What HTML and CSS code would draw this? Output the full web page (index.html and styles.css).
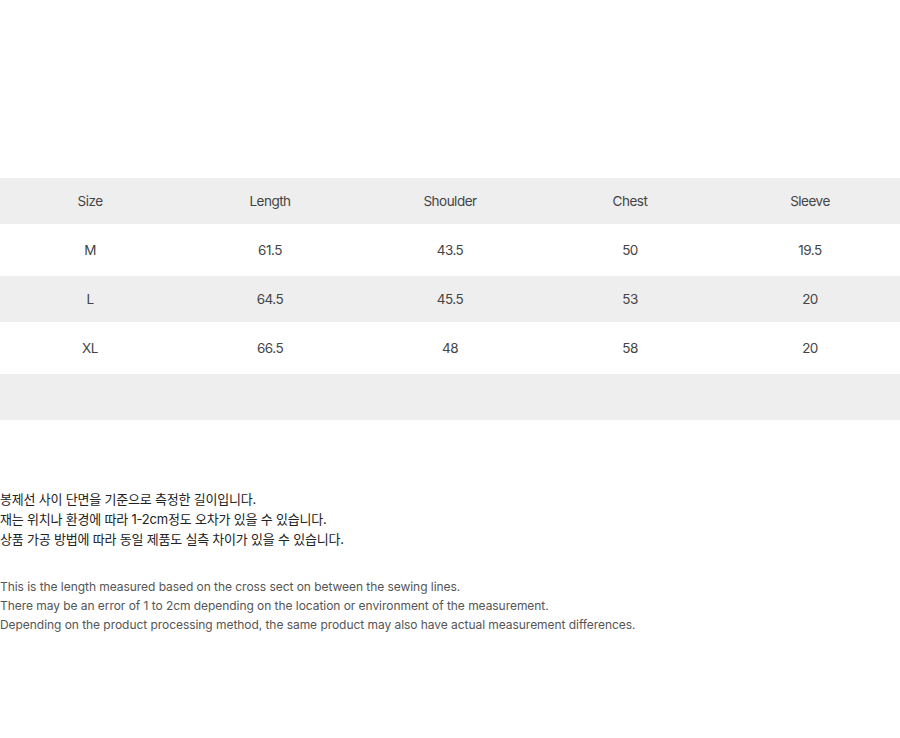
FILE: index.html
```html
<!DOCTYPE html>
<html lang="ko">
<head>
<meta charset="utf-8">
<link rel="stylesheet" href="styles.css">
</head>
<body>
<div class="page">
  <div class="size-table">
    <div class="row gray short"><div class="cell">Size</div><div class="cell">Length</div><div class="cell">Shoulder</div><div class="cell">Chest</div><div class="cell">Sleeve</div></div>
    <div class="row tall"><div class="cell">M</div><div class="cell">61.5</div><div class="cell">43.5</div><div class="cell">50</div><div class="cell">19.5</div></div>
    <div class="row gray short"><div class="cell">L</div><div class="cell">64.5</div><div class="cell">45.5</div><div class="cell">53</div><div class="cell">20</div></div>
    <div class="row tall"><div class="cell">XL</div><div class="cell">66.5</div><div class="cell">48</div><div class="cell">58</div><div class="cell">20</div></div>
    <div class="row gray short"></div>
  </div>
  <div class="notes-ko">
    <p>봉제선 사이 단면을 기준으로 측정한 길이입니다.</p>
    <p>재는 위치나 환경에 따라 1-2cm정도 오차가 있을 수 있습니다.</p>
    <p>상품 가공 방법에 따라 동일 제품도 실측 차이가 있을 수 있습니다.</p>
  </div>
  <div class="notes-en">
    <p>This is the length measured based on the cross sect on between the sewing lines.</p>
    <p>There may be an error of 1 to 2cm depending on the location or environment of the measurement.</p>
    <p>Depending on the product processing method, the same product may also have actual measurement differences.</p>
  </div>
</div>
</body>
</html>
```
FILE: styles.css
```css
html, body {
  margin: 0;
  padding: 0;
  background: #fff;
}
body {
  font-family: Inter, "Noto Sans CJK KR", sans-serif;
  color: #444;
}
.page {
  padding-top: 178px;
}
.size-table {
  display: flex;
  flex-direction: column;
}
.row {
  display: grid;
  grid-template-columns: repeat(5, 1fr);
  align-items: center;
  font-size: 13.5px;
  letter-spacing: -0.5px;
  color: #444;
}
.row.gray {
  background: #eeeeee;
}
.row.short {
  height: 46px;
}
.row.tall {
  height: 52px;
}
.cell {
  text-align: center;
}
p {
  margin: 0;
}
.notes-ko {
  margin-top: 69px;
  font-size: 13px;
  line-height: 20px;
  letter-spacing: -0.2px;
  color: #222;
}
.notes-en {
  margin-top: 28px;
  font-size: 12px;
  line-height: 19px;
  letter-spacing: -0.05px;
  color: #555;
}
```
